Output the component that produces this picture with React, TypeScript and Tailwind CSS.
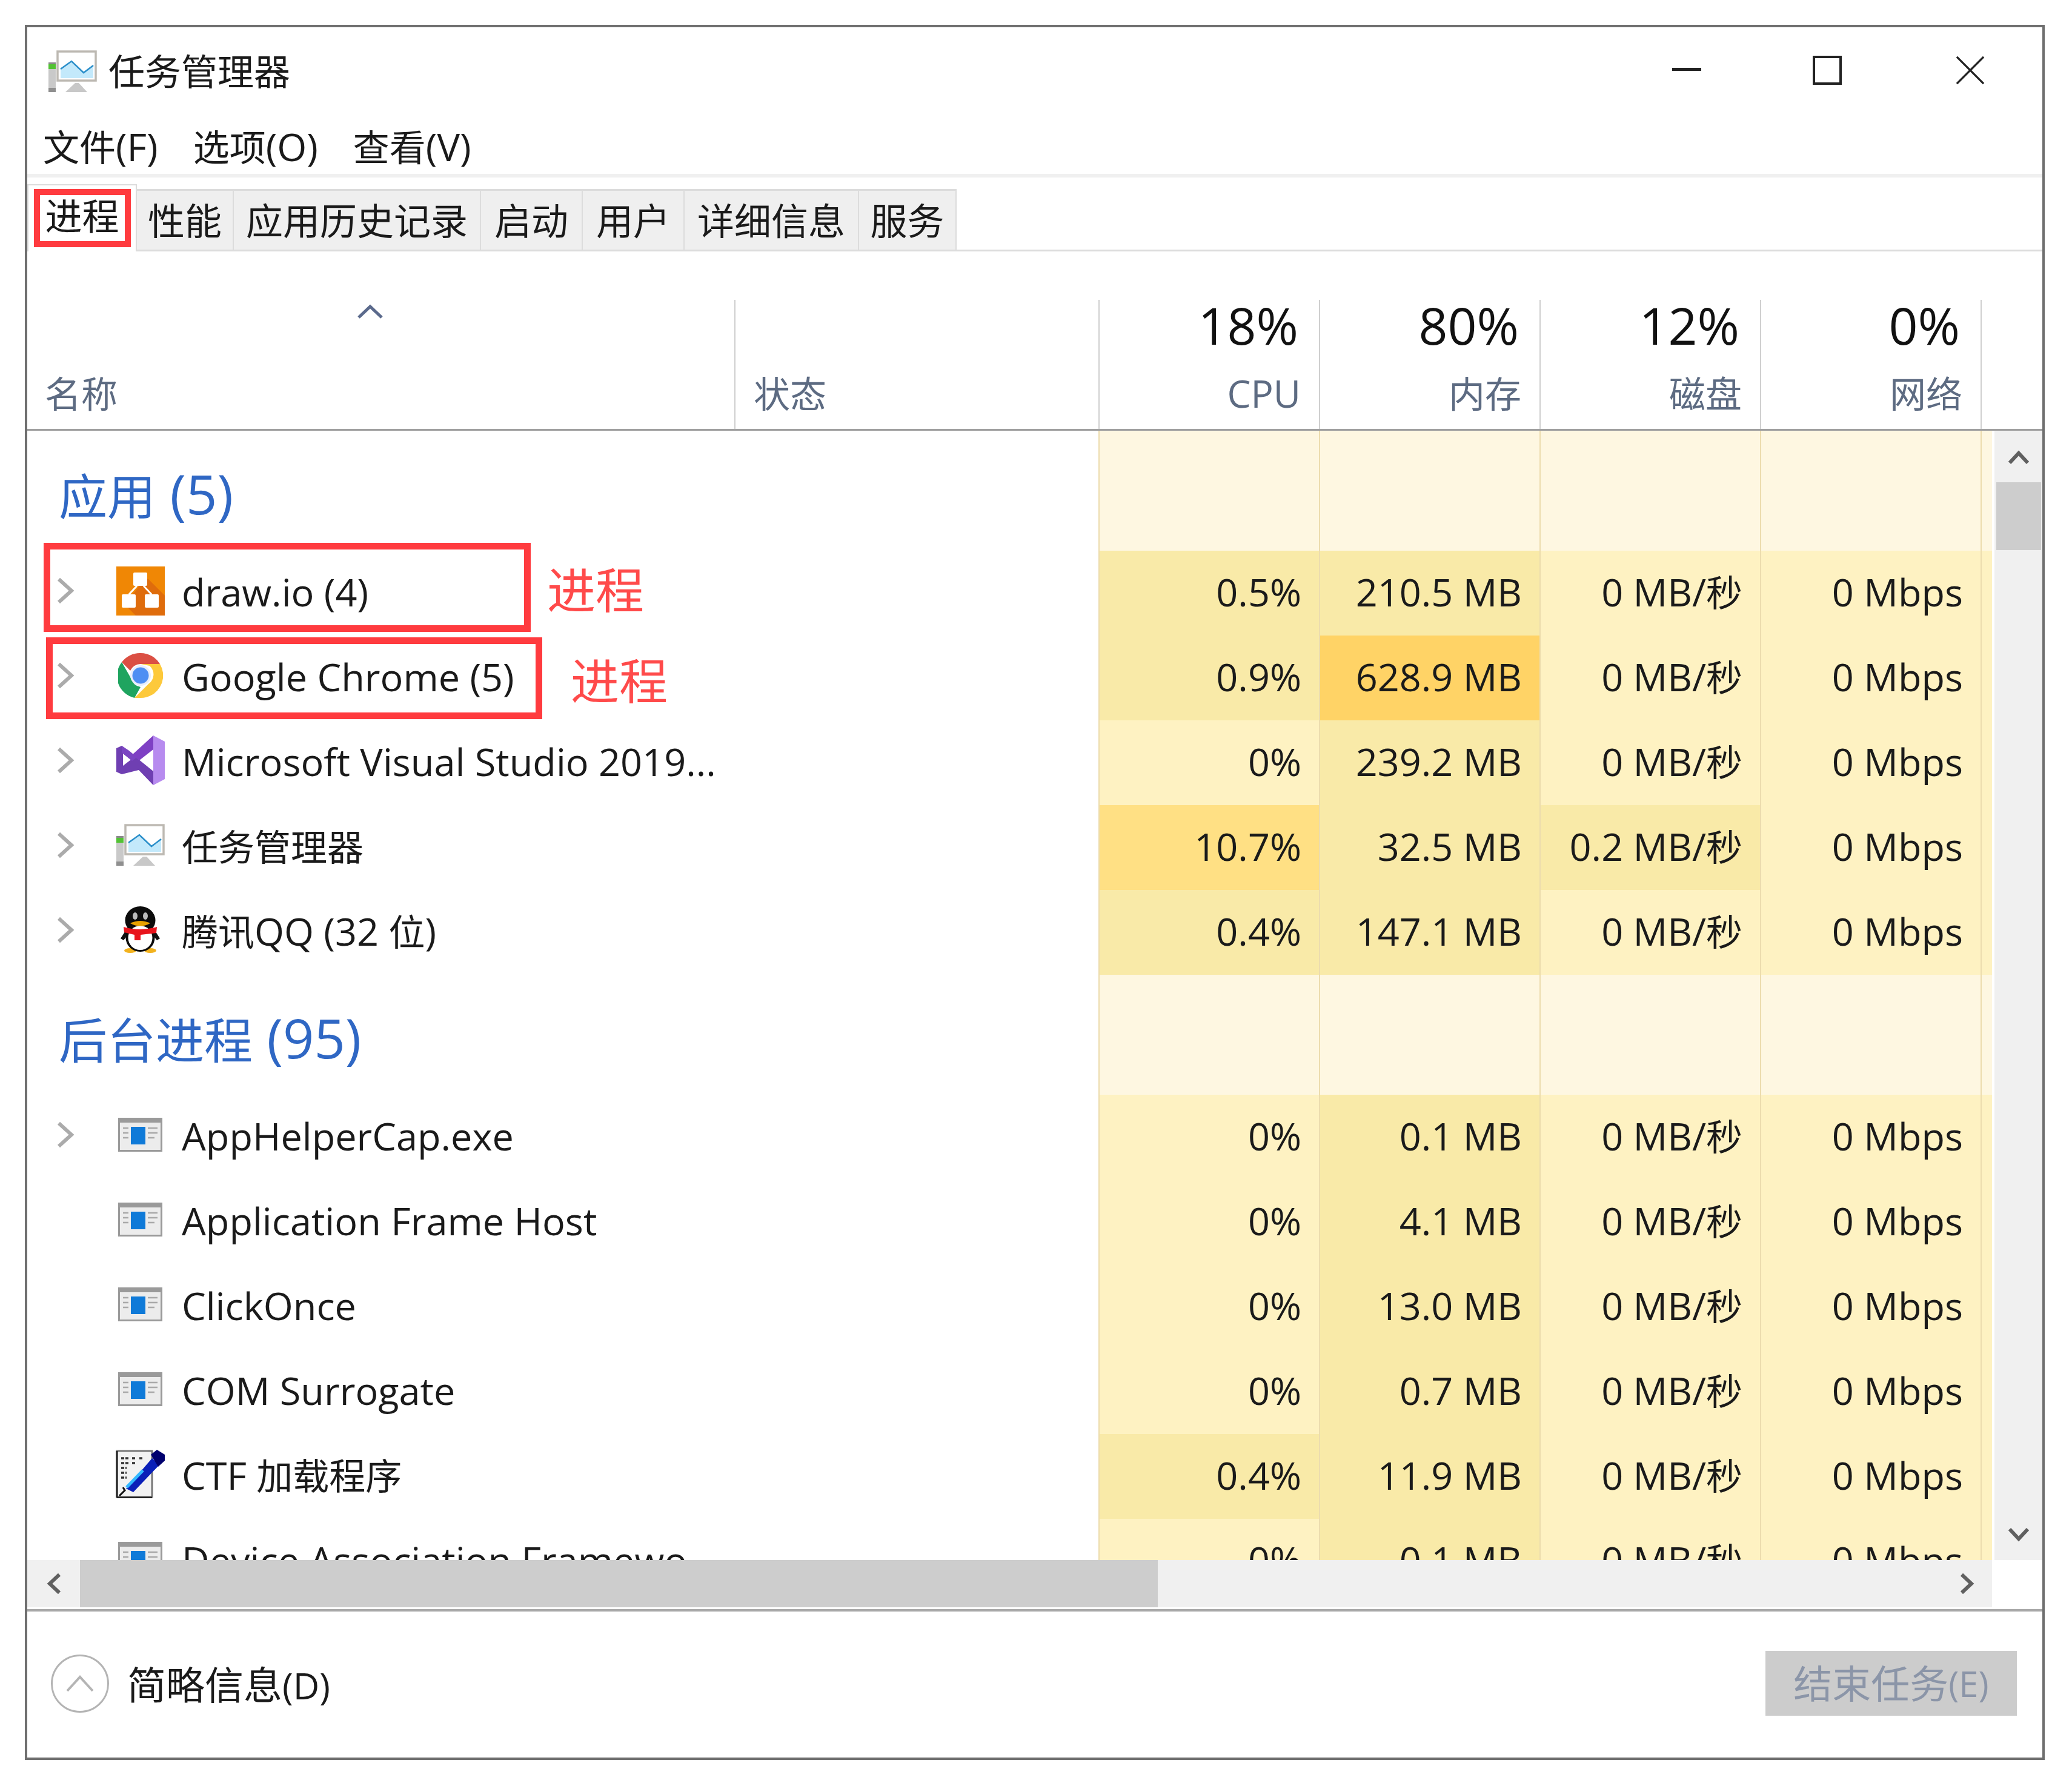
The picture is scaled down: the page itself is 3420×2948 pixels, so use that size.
import React from 'react';

const LATIN = "font-['Open_Sans','Noto_Sans_CJK_SC',sans-serif]";

const Mixed = ({ text, cjk = 'text-[60px]' }: { text: string; cjk?: string }) => (
  <>
    {text.split(/([\u4e00-\u9fff]+)/).map((part, i) =>
      i % 2 === 1 ? (
        <span key={i} className={cjk}>
          {part}
        </span>
      ) : (
        part
      ),
    )}
  </>
);

const Chevron = () => (
  <svg width="30" height="46" viewBox="0 0 30 46" fill="none" className="block">
    <path d="M4 4 L25 23 L4 42" stroke="#ababab" strokeWidth="6" />
  </svg>
);

const TaskManagerIcon = ({ size = 80 }: { size?: number }) => (
  <svg width={size} height={size * 0.875} viewBox="0 0 80 70" className="block">
    <rect x="0" y="21" width="12" height="48" fill="#c9c9c9" />
    <rect x="0" y="23" width="12" height="8" fill="#52c234" />
    <rect x="0" y="20" width="12" height="3" fill="#8a8a8a" />
    <rect x="0" y="62" width="12" height="7" fill="#8f8f8f" />
    <rect x="15" y="2" width="63" height="48" fill="#fff" stroke="#bdb9b2" strokeWidth="3.500" />
    <path d="M20 29 L38 18 L58 37 L74 25 V46 H20 Z" fill="#c3e9fb" />
    <path d="M20 31 L38 18 L58 37 L74 25" fill="none" stroke="#2b8fca" strokeWidth="2.500" />
    <path d="M28 69 L44 54 H50 L64 69 Z" fill="#c8c8c8" />
  </svg>
);

const AppIcon = () => (
  <svg width="73" height="56" viewBox="0 0 73 56" className="block">
    <rect x="1.500" y="1.500" width="70" height="53" fill="#ececec" stroke="#9a9a9a" strokeWidth="3" />
    <rect x="2" y="2" width="69" height="6" fill="#9a9a9a" />
    <rect x="21" y="15" width="24" height="29" fill="#0f7ad8" />
    <path d="M8 17 H17 M8 25 H17 M8 33 H17 M49 17 H65 M49 25 H65 M49 33 H60" stroke="#a9a9a9" strokeWidth="2.500" />
  </svg>
);

const DrawioIcon = () => (
  <svg width="80" height="81" viewBox="0 0 80 81" className="block">
    <rect width="80" height="81" fill="#f08705" />
    <path d="M52 20 L80 48 V81 H32 L12 61 Z" fill="#df6c0c" />
    <path d="M34 32 L21 46 M45 32 L58 46" stroke="#fff" strokeWidth="3" />
    <path d="M39.500 30 L49 43 H44 V68 H35 V43 H30 Z" fill="#df6c0c" />
    <rect x="28" y="10" width="23" height="22" rx="2" fill="#fff" />
    <rect x="9" y="46" width="23" height="22" rx="2" fill="#fff" />
    <rect x="47" y="46" width="23" height="22" rx="2" fill="#fff" />
  </svg>
);

const ChromeIcon = () => (
  <svg width="74" height="76" viewBox="0 0 74 76" className="block">
    <path d="M37 1 A37 37 0 0 1 69 19 L37 19 A19 19 0 0 0 20 30 L6 16 A37 37 0 0 1 37 1 Z" fill="#db4f43" />
    <path d="M6 16 L22 44 A19 19 0 0 0 37 57 L27 75 A37 37 0 0 1 6 16 Z" fill="#1fa45f" />
    <path d="M69 19 A37 37 0 0 1 37 75 L27 75 L50 52 A19 19 0 0 0 52 22 L37 19 Z" fill="#fdc93b" />
    <circle cx="37" cy="38" r="17" fill="#e9eefb" />
    <circle cx="37" cy="38" r="13.500" fill="#4e8ef3" />
  </svg>
);

const VsIcon = () => (
  <svg width="80" height="82" viewBox="0 0 80 82" className="block">
    <path d="M0 21 L9 17 L61 59 V82 L37 57 L9 64 L0 60 Z M11 30 V50 L24 40 Z" fill="#6f3fb2" fillRule="evenodd" />
    <path d="M9 17 L21 25 L34 36 L26 42 L9 28 Z" fill="#7b45c2" />
    <path d="M61 0 V23 L38 41 L26 32 Z" fill="#7e40c4" />
    <path d="M61 0 L80 10 V72 L61 82 Z" fill="#b78bef" />
  </svg>
);

const QqIcon = () => (
  <svg width="67" height="78" viewBox="0 0 67 78" className="block">
    <ellipse cx="17" cy="73" rx="10" ry="4" fill="#f2b21e" />
    <ellipse cx="50" cy="73" rx="10" ry="4" fill="#f2b21e" />
    <path d="M14 33 L1 53 L6 56 L14 46 Z M53 33 L66 53 L61 56 L53 46 Z" fill="#111" />
    <ellipse cx="33.500" cy="23" rx="25" ry="23" fill="#0c0c0c" />
    <ellipse cx="33.500" cy="52" rx="24" ry="23" fill="#0c0c0c" />
    <ellipse cx="33.500" cy="52" rx="20" ry="20" fill="#fff" />
    <ellipse cx="25" cy="16" rx="4" ry="6" fill="#bbb" />
    <ellipse cx="42" cy="16" rx="4" ry="6" fill="#bbb" />
    <path d="M17 28 Q33.500 20 50 28 Q33.500 37 17 28 Z" fill="#e8a200" />
    <path d="M6 34 Q33.500 42 61 34 L60 44 L34 47 V56 H24 V47 L7 43 Z" fill="#e8141c" />
  </svg>
);

const CtfIcon = () => (
  <svg width="81" height="80" viewBox="0 0 81 80" className="block">
    <path d="M2 2 H60 V78 H2 Z" fill="#f2f2f2" stroke="#777" strokeWidth="3" />
    <path d="M2 79 H60 M2 2 V79" stroke="#222" strokeWidth="3" />
    <path d="M9 14 H22 M27 14 H34 M39 14 H46 M9 22 H22 M27 22 H34 M9 30 H18 M9 38 H18 M9 46 H18" stroke="#333" strokeWidth="3.500" strokeDasharray="5 2" />
    <path d="M6 76 L15 67 L12 62" fill="none" stroke="#111" strokeWidth="3" />
    <path d="M17 64 L60 14 L72 25 L29 70 Z" fill="#0a1fb8" />
    <path d="M18 62 L45 34" stroke="#33b8ff" strokeWidth="5" />
    <path d="M58 8 L68 0 L81 8 V18 L70 28 Z" fill="#00006e" />
  </svg>
);

type Cell = { text: string; bg: string };

// shades the task manager uses for load
const L = 'bg-[#fef2c2]';
const M = 'bg-[#f9eaa8]';
const H = 'bg-[#ffe084]';
const X = 'bg-[#ffd366]';

const MetricCell = ({ text, bg }: Cell) => (
  <div className={`w-[364px] shrink-0 border-l-2 border-[#ecdcae] pr-[29px] pb-[4px] flex items-center justify-end ${bg}`}>
    <span className="whitespace-nowrap">
      <Mixed text={text} />
    </span>
  </div>
);

const ProcessRow = ({
  icon,
  name,
  expandable,
  cells,
}: {
  icon: React.ReactNode;
  name: string;
  expandable?: boolean;
  cells: Cell[];
}) => (
  <div className="flex h-[140px] shrink-0">
    <div className="w-[1768px] shrink-0 flex items-center bg-white">
      <div className="w-[50px] ml-[48px] mb-[8px]">{expandable && <Chevron />}</div>
      <div className="w-[81px] ml-[48px] mb-[8px] flex justify-center">{icon}</div>
      <span className="ml-[28px] whitespace-nowrap mb-[4px]">
        <Mixed text={name} />
      </span>
    </div>
    {cells.map((c, i) => (
      <MetricCell key={i} {...c} />
    ))}
    <div className="w-[19px] shrink-0 border-l-2 border-[#ecdcae] bg-[#fef2c2]" />
  </div>
);

const GroupRow = ({ title }: { title: string }) => (
  <div className="flex h-[198px] shrink-0">
    <div className="w-[1768px] shrink-0 flex items-center bg-white pl-[52px]">
      <span className="text-[90px] text-[#2f67c4] leading-none mt-[8px]">
        <Mixed text={title} cjk="text-[80px]" />
      </span>
    </div>
    {[0, 1, 2, 3].map((i) => (
      <div key={i} className="w-[364px] shrink-0 border-l-2 border-[#ecdcae] bg-[#fef7e1]" />
    ))}
    <div className="w-[19px] shrink-0 border-l-2 border-[#ecdcae] bg-[#fef7e1]" />
  </div>
);

const cells = (cpu: [string, string], mem: [string, string], disk: [string, string]): Cell[] => [
  { text: cpu[0], bg: cpu[1] },
  { text: mem[0], bg: mem[1] },
  { text: disk[0], bg: disk[1] },
  { text: '0 Mbps', bg: L },
];

const zero: [string, string] = ['0 MB/秒', L];

const HeaderCol = ({ pct, label }: { pct: string; label: string }) => (
  <div className="w-[364px] shrink-0 border-l-2 border-[#cfcfcf] flex flex-col items-end pr-[30px] mt-[80px]">
    <span className="text-[84px] leading-none pr-[4px] text-[#111]">{pct}</span>
    <span className="text-[62px] leading-none mt-[39px] text-[#5d6b82]">
      <Mixed text={label} />
    </span>
  </div>
);

const tabs = [
  { label: '性能', w: 'w-[160px]' },
  { label: '应用历史记录', w: 'w-[408px]' },
  { label: '启动', w: 'w-[168px]' },
  { label: '用户', w: 'w-[168px]' },
  { label: '详细信息', w: 'w-[288px]' },
  { label: '服务', w: 'w-[161px]' },
];

export default function App() {
  return (
    <div className={`w-[3420px] h-[2948px] bg-white pt-[41px] pl-[41px] text-[63px] text-[#1a1a1a] ${LATIN}`}>
      <div className="relative w-[3334px] h-[2864px] border-[4px] border-[#6f6f6f] flex flex-col overflow-hidden">
        {/* title bar */}
        <div className="h-[146px] shrink-0 flex items-center pl-[35px]">
          <TaskManagerIcon />
          <span className="ml-[19px] leading-none text-[60px]">任务管理器</span>
          <div className="ml-auto flex items-center pr-[95px] mb-[4px]">
            <div className="w-[48px] h-[5px] bg-[#222] mb-[4px]" />
            <div className="ml-[184px] w-[48px] h-[48px] border-[4px] border-[#222]" />
            <svg width="48" height="48" viewBox="0 0 50 50" className="ml-[188px]">
              <path d="M2 2 L48 48 M48 2 L2 48" stroke="#222" strokeWidth="3.500" />
            </svg>
          </div>
        </div>

        {/* menu */}
        <div className="h-[96px] shrink-0 flex items-start pl-[26px] pt-[4px] gap-[58px]">
          <span><Mixed text="文件(F)" /></span>
          <span><Mixed text="选项(O)" /></span>
          <span><Mixed text="查看(V)" /></span>
        </div>
        <div className="h-[6px] shrink-0 bg-[#f0f0f0]" />

        {/* tabs */}
        <div className="h-[122px] shrink-0 flex items-end pt-[11px] text-[61px]">
          <div className="relative w-[181px] h-[111px] bg-white border-l-2 border-t-2 border-r-2 border-[#dcdcdc] flex items-center justify-center">
            <span className="leading-none mb-[8px]">进程</span>
            <div className="absolute left-[9px] right-[8px] top-[6px] bottom-[7px] border-[10px] border-[#ff3b3f]" />
          </div>
          <div className="flex-1 flex h-[103px] border-b-[3px] border-[#dcdcdc]">
            {tabs.map((t) => (
              <div key={t.label} className={`${t.w} bg-[#efefef] border-t-[3px] border-r-2 border-[#dcdcdc] flex items-center justify-center`}>
                <span className="leading-none mt-[2px]">{t.label}</span>
              </div>
            ))}
          </div>
        </div>

        {/* column headers */}
        <div className="h-[296px] shrink-0 flex border-b-[3px] border-[#a0a0a0] relative">
          <div className="w-[1167px] shrink-0 relative">
            <svg width="44" height="24" viewBox="0 0 44 24" className="absolute left-[544px] top-[87px]">
              <path d="M3 22 L22 4 L41 22" fill="none" stroke="#5b6a8c" strokeWidth="5" />
            </svg>
            <span className="absolute left-[29px] bottom-[28px] leading-none text-[60px] text-[#5d6b82]">名称</span>
          </div>
          <div className="w-[601px] shrink-0 border-l-2 border-[#cfcfcf] mt-[80px] relative">
            <span className="absolute left-[30px] bottom-[28px] leading-none text-[60px] text-[#5d6b82]">状态</span>
          </div>
          <HeaderCol pct="18%" label="CPU" />
          <HeaderCol pct="80%" label="内存" />
          <HeaderCol pct="12%" label="磁盘" />
          <HeaderCol pct="0%" label="网络" />
          <div className="w-[2px] mt-[80px] bg-[#cfcfcf]" />
        </div>

        {/* process list */}
        <div className="h-[1864px] shrink-0 flex overflow-hidden">
          <div className="w-[3243px] shrink-0 flex flex-col">
            <GroupRow title="应用 (5)" />
            <ProcessRow expandable icon={<DrawioIcon />} name="draw.io (4)" cells={cells(['0.5%', M], ['210.5 MB', M], zero)} />
            <ProcessRow expandable icon={<ChromeIcon />} name="Google Chrome (5)" cells={cells(['0.9%', M], ['628.9 MB', X], zero)} />
            <ProcessRow expandable icon={<VsIcon />} name="Microsoft Visual Studio 2019..." cells={cells(['0%', L], ['239.2 MB', M], zero)} />
            <ProcessRow expandable icon={<TaskManagerIcon />} name="任务管理器" cells={cells(['10.7%', H], ['32.5 MB', M], ['0.2 MB/秒', M])} />
            <ProcessRow expandable icon={<QqIcon />} name="腾讯QQ (32 位)" cells={cells(['0.4%', M], ['147.1 MB', M], zero)} />
            <GroupRow title="后台进程 (95)" />
            <ProcessRow expandable icon={<AppIcon />} name="AppHelperCap.exe" cells={cells(['0%', L], ['0.1 MB', M], zero)} />
            <ProcessRow icon={<AppIcon />} name="Application Frame Host" cells={cells(['0%', L], ['4.1 MB', M], zero)} />
            <ProcessRow icon={<AppIcon />} name="ClickOnce" cells={cells(['0%', L], ['13.0 MB', M], zero)} />
            <ProcessRow icon={<AppIcon />} name="COM Surrogate" cells={cells(['0%', L], ['0.7 MB', M], zero)} />
            <ProcessRow icon={<CtfIcon />} name="CTF 加载程序" cells={cells(['0.4%', M], ['11.9 MB', M], zero)} />
            <ProcessRow icon={<AppIcon />} name="Device Association Framewo" cells={cells(['0%', L], ['0.1 MB', M], zero)} />
          </div>
          {/* vertical scrollbar */}
          <div className="ml-[4px] flex-1 bg-[#f0f0f0] flex flex-col items-center relative">
            <svg width="36" height="24" viewBox="0 0 36 24" className="mt-[32px]">
              <path d="M3 21 L18 5 L33 21" fill="none" stroke="#606060" strokeWidth="6" />
            </svg>
            <div className="mt-[29px] w-[74px] h-[112px] bg-[#cdcdcd]" />
            <svg width="36" height="24" viewBox="0 0 36 24" className="mt-auto mb-[30px]">
              <path d="M3 3 L18 19 L33 3" fill="none" stroke="#606060" strokeWidth="6" />
            </svg>
          </div>
        </div>

        {/* horizontal scrollbar */}
        <div className="h-[78px] shrink-0 flex">
          <div className="w-[3243px] bg-[#f0f0f0] flex items-center relative">
            <div className="w-[87px] flex justify-center">
              <svg width="24" height="36" viewBox="0 0 24 36">
                <path d="M21 3 L5 18 L21 33" fill="none" stroke="#606060" strokeWidth="6" />
              </svg>
            </div>
            <div className="w-[1779px] h-full bg-[#cdcdcd]" />
            <svg width="24" height="36" viewBox="0 0 24 36" className="ml-auto mr-[29px]">
              <path d="M3 3 L19 18 L3 33" fill="none" stroke="#606060" strokeWidth="6" />
            </svg>
          </div>
        </div>

        <div className="h-[4px] mt-[3px] shrink-0 bg-[#a8a8a8]" />

        {/* footer */}
        <div className="flex-1 flex items-center pl-[39px] pr-[42px]">
          <div className="w-[96px] h-[96px] rounded-full border-[3px] border-[#b4b4b4] flex items-center justify-center mb-[4px]">
            <svg width="48" height="30" viewBox="0 0 48 30">
              <path d="M3 27 L24 4 L45 27" fill="none" stroke="#b4b4b4" strokeWidth="4" />
            </svg>
          </div>
          <span className="ml-[30px] text-[64px] leading-none flex items-baseline">
            简略信息<span className="text-[60px]">(D)</span>
          </span>
          <div className="ml-auto w-[415px] h-[107px] bg-[#cccccc] flex items-center justify-center text-[#8b95a8] text-[64px] leading-none mb-[4px]">
            结束任务<span className="text-[58px]">(E)</span>
          </div>
        </div>

        {/* annotations */}
        <div className="absolute left-[27px] top-[851px] w-[804px] h-[147px] border-[11px] border-[#ff3b3f]" />
        <div className="absolute left-[31px] top-[1007px] w-[819px] h-[135px] border-[11px] border-[#ff3b3f]" />
        <span className="absolute left-[858px] top-[888px] text-[80px] leading-none text-[#ff4a4a]">进程</span>
        <span className="absolute left-[897px] top-[1038px] text-[80px] leading-none text-[#ff4a4a]">进程</span>
      </div>
    </div>
  );
}
